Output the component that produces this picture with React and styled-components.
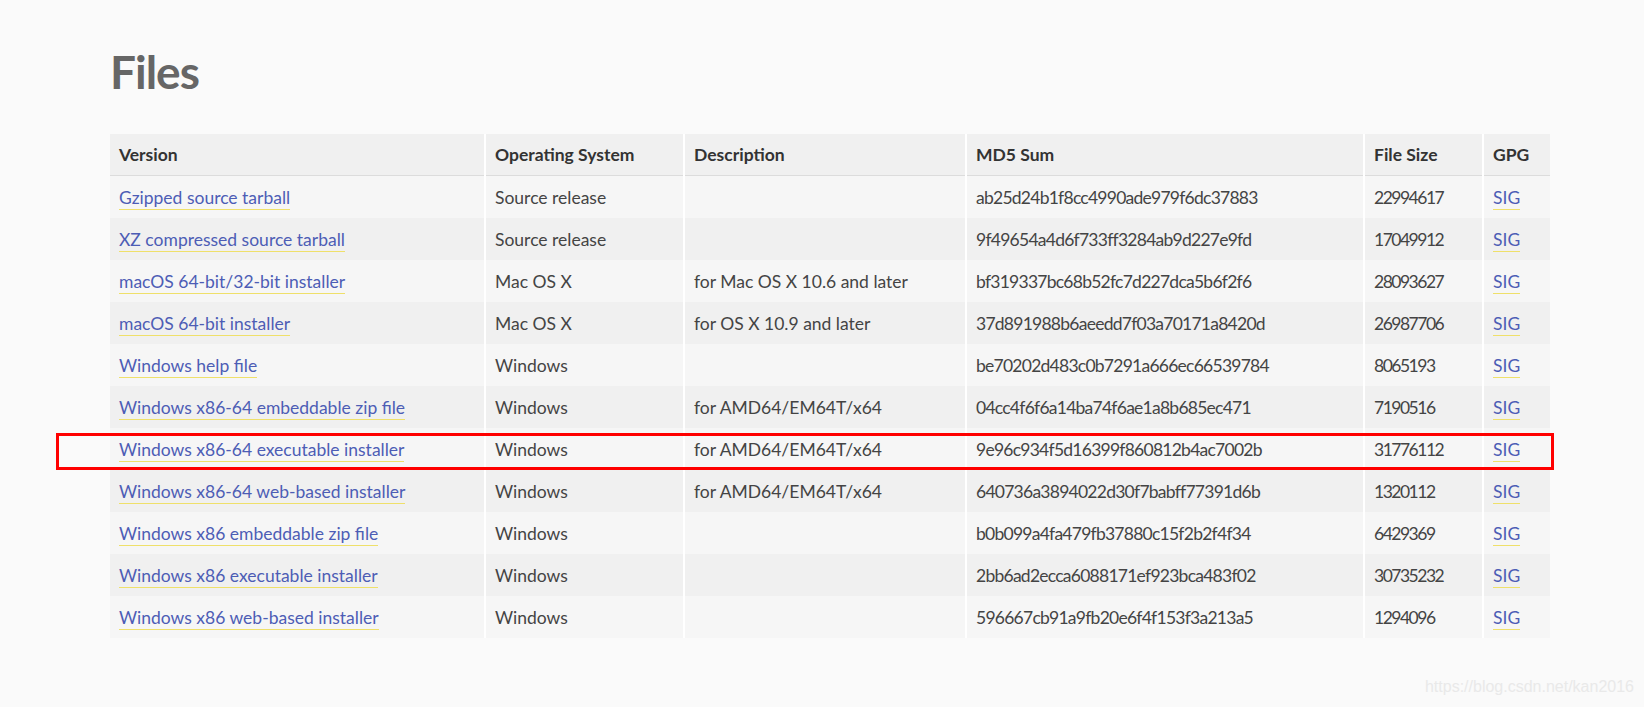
import React from 'react';
import styled, { createGlobalStyle } from 'styled-components';

const GlobalStyle = createGlobalStyle`
  html, body {
    margin: 0;
    padding: 0;
    background: #fafafa;
  }
  body {
    font-family: Lato, "Liberation Sans", sans-serif;
  }
`;

const Page = styled.div`
  position: relative;
  min-height: 707px;
  box-sizing: border-box;
  padding: 44px 0 0 110px;
`;

const Title = styled.h2`
  margin: 0;
  font-size: 46px;
  line-height: 1.2;
  font-weight: 700;
  letter-spacing: -1px;
  color: #666;
`;

const Table = styled.table`
  margin-top: 35px;
  width: 1440px;
  table-layout: fixed;
  border-collapse: collapse;
  font-size: 17.5px;
`;

const HeadCell = styled.th`
  height: 41px;
  padding: 0 0 0 9px;
  text-align: left;
  font-weight: 700;
  color: #333;
  background: #f0f0f0;
  border-bottom: 1px solid #dcdcdc;
  border-left: 2px solid #fff;
  &:first-child {
    border-left: none;
  }
`;

const Row = styled.tr`
  background: ${(p) => (p.$odd ? '#f0f0f0' : '#f6f6f6')};
`;

const Cell = styled.td`
  height: 42px;
  padding: 0 0 0 9px;
  color: #444;
  white-space: nowrap;
  letter-spacing: ${(p) => p.$tight || 0}px;
  border-left: 2px solid #fff;
  &:first-child {
    border-left: none;
  }
`;

const Link = styled.a`
  color: #4d5db5;
  text-decoration: none;
  border-bottom: 1px solid #efe06a;
  padding-bottom: 1px;
`;

const Highlight = styled.div`
  position: absolute;
  left: 56px;
  top: 433px;
  width: 1498px;
  height: 37px;
  box-sizing: border-box;
  border: 3px solid #ff0000;
  pointer-events: none;
`;

const Watermark = styled.div`
  position: absolute;
  right: 10px;
  bottom: 11px;
  font-family: "Liberation Sans", Arial, sans-serif;
  font-size: 16px;
  color: #e9e9e9;
`;

const columns = [
  ['Version', 375],
  ['Operating System', 199],
  ['Description', 282],
  ['MD5 Sum', 398],
  ['File Size', 119],
  ['GPG', 67],
];

const files = [
  ['Gzipped source tarball', 'Source release', '', 'ab25d24b1f8cc4990ade979f6dc37883', '22994617'],
  ['XZ compressed source tarball', 'Source release', '', '9f49654a4d6f733ff3284ab9d227e9fd', '17049912'],
  ['macOS 64-bit/32-bit installer', 'Mac OS X', 'for Mac OS X 10.6 and later', 'bf319337bc68b52fc7d227dca5b6f2f6', '28093627'],
  ['macOS 64-bit installer', 'Mac OS X', 'for OS X 10.9 and later', '37d891988b6aeedd7f03a70171a8420d', '26987706'],
  ['Windows help file', 'Windows', '', 'be70202d483c0b7291a666ec66539784', '8065193'],
  ['Windows x86-64 embeddable zip file', 'Windows', 'for AMD64/EM64T/x64', '04cc4f6f6a14ba74f6ae1a8b685ec471', '7190516'],
  ['Windows x86-64 executable installer', 'Windows', 'for AMD64/EM64T/x64', '9e96c934f5d16399f860812b4ac7002b', '31776112'],
  ['Windows x86-64 web-based installer', 'Windows', 'for AMD64/EM64T/x64', '640736a3894022d30f7babff77391d6b', '1320112'],
  ['Windows x86 embeddable zip file', 'Windows', '', 'b0b099a4fa479fb37880c15f2b2f4f34', '6429369'],
  ['Windows x86 executable installer', 'Windows', '', '2bb6ad2ecca6088171ef923bca483f02', '30735232'],
  ['Windows x86 web-based installer', 'Windows', '', '596667cb91a9fb20e6f4f153f3a213a5', '1294096'],
];

const App = () => (
  <Page>
    <GlobalStyle />
    <Title>Files</Title>
    <Table>
      <colgroup>
        {columns.map(([name, w]) => (
          <col key={name} style={{ width: w }} />
        ))}
      </colgroup>
      <thead>
        <tr>
          {columns.map(([name]) => (
            <HeadCell key={name}>{name}</HeadCell>
          ))}
        </tr>
      </thead>
      <tbody>
        {files.map(([version, os, desc, md5, size], i) => (
          <Row key={version} $odd={i % 2 === 1}>
            <Cell>
              <Link href="#">{version}</Link>
            </Cell>
            <Cell>{os}</Cell>
            <Cell>{desc}</Cell>
            <Cell $tight={-0.75}>{md5}</Cell>
            <Cell $tight={-1.5}>{size}</Cell>
            <Cell>
              <Link href="#">SIG</Link>
            </Cell>
          </Row>
        ))}
      </tbody>
    </Table>
    <Highlight />
    <Watermark>https://blog.csdn.net/kan2016</Watermark>
  </Page>
);

export default App;
